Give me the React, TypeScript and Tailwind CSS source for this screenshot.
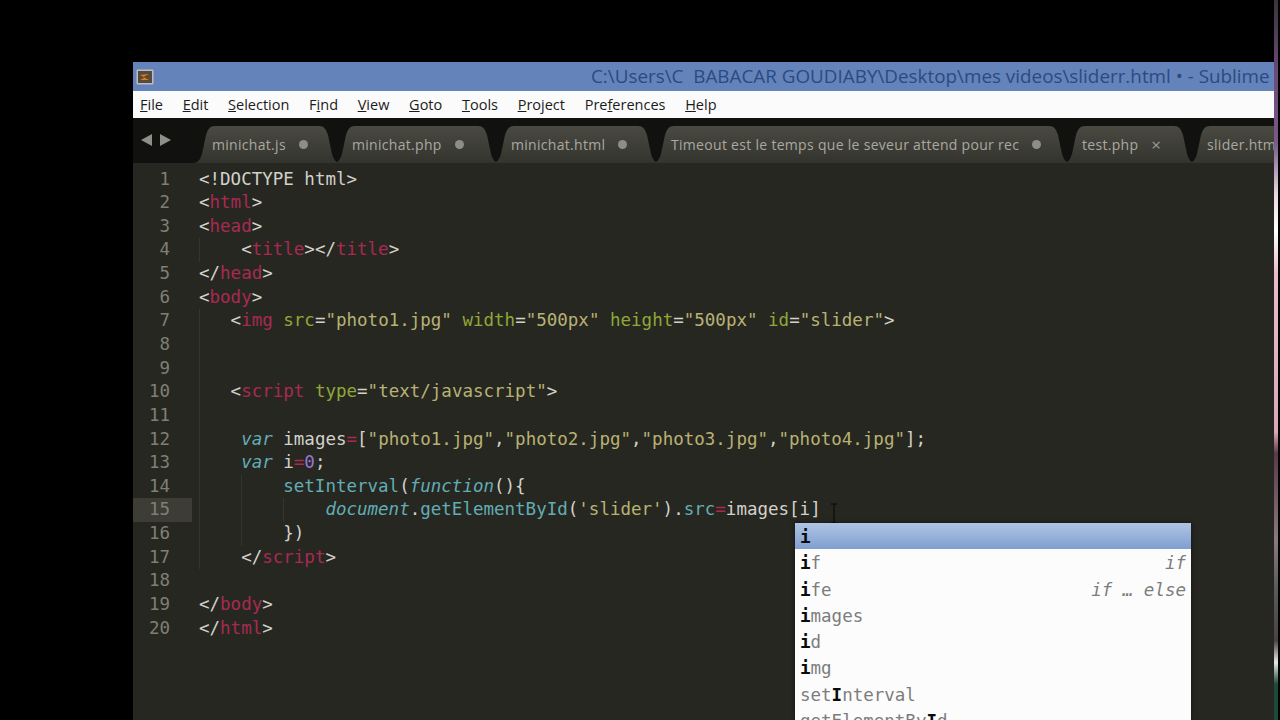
import React from "react";

type Tok = [string, string?];

const W = "text-[#d2d2ca]";
const R = "text-[#a82a52]";
const G = "text-[#8fa838]";
const Y = "text-[#b8b274]";
const B = "text-[#62adb6]";
const V = "text-[#9478d0]";
const I = "text-[#62adb6] italic";

const CH = 10.535;

const lines: { indent: number; toks: Tok[]; guides?: number[] }[] = [
  { indent: 0, toks: [["<!DOCTYPE html>", W]] },
  { indent: 0, toks: [["<", W], ["html", R], [">", W]] },
  { indent: 0, toks: [["<", W], ["head", R], [">", W]] },
  { indent: 4, toks: [["<", W], ["title", R], ["></", W], ["title", R], [">", W]], guides: [0] },
  { indent: 0, toks: [["</", W], ["head", R], [">", W]] },
  { indent: 0, toks: [["<", W], ["body", R], [">", W]] },
  {
    indent: 3,
    toks: [
      ["<", W], ["img", R], [" ", W], ["src", G], ["=", W], ['"photo1.jpg"', Y], [" ", W],
      ["width", G], ["=", W], ['"500px"', Y], [" ", W], ["height", G], ["=", W], ['"500px"', Y], [" ", W],
      ["id", G], ["=", W], ['"slider"', Y], [">", W],
    ],
    guides: [0],
  },
  { indent: 0, toks: [], guides: [0] },
  { indent: 0, toks: [], guides: [0] },
  {
    indent: 3,
    toks: [["<", W], ["script", R], [" ", W], ["type", G], ["=", W], ['"text/javascript"', Y], [">", W]],
    guides: [0],
  },
  { indent: 0, toks: [], guides: [0] },
  {
    indent: 4,
    toks: [
      ["var", I], [" images", W], ["=", R], ["[", W], ['"photo1.jpg"', Y], [",", W], ['"photo2.jpg"', Y], [",", W],
      ['"photo3.jpg"', Y], [",", W], ['"photo4.jpg"', Y], ["];", W],
    ],
    guides: [0],
  },
  { indent: 4, toks: [["var", I], [" i", W], ["=", R], ["0", V], [";", W]], guides: [0] },
  { indent: 8, toks: [["setInterval", B], ["(", W], ["function", I], ["(){", W]], guides: [0, 4] },
  {
    indent: 12,
    toks: [
      ["document", I], [".", W], ["getElementById", B], ["(", W], ["'slider'", Y], [")", W], [".", W], ["src", B],
      ["=", R], ["images[i]", W],
    ],
    guides: [0, 4, 8],
  },
  { indent: 8, toks: [["})", W]], guides: [0, 4] },
  { indent: 4, toks: [["</", W], ["script", R], [">", W]], guides: [0] },
  { indent: 0, toks: [] },
  { indent: 0, toks: [["</", W], ["body", R], [">", W]] },
  { indent: 0, toks: [["</", W], ["html", R], [">", W]] },
];

const menu: [string, string, string][] = [
  ["", "F", "ile"],
  ["", "E", "dit"],
  ["", "S", "election"],
  ["F", "i", "nd"],
  ["", "V", "iew"],
  ["", "G", "oto"],
  ["", "T", "ools"],
  ["", "P", "roject"],
  ["Pre", "f", "erences"],
  ["", "H", "elp"],
];

const tabs = [
  { name: "minichat.js", width: "w-[148px]", mark: "dot" },
  { name: "minichat.php", width: "w-[167px]", mark: "dot" },
  { name: "minichat.html", width: "w-[168px]", mark: "dot" },
  { name: "Timeout est le temps que le seveur attend pour rec", width: "w-[419px]", mark: "dot" },
  { name: "test.php", width: "w-[133px]", mark: "x" },
  { name: "slider.html", width: "w-[200px]", mark: "" },
];

const popup: { pre?: string; hit: string; rest: string; hint?: string; sel?: boolean }[] = [
  { hit: "i", rest: "", sel: true },
  { hit: "i", rest: "f", hint: "if" },
  { hit: "i", rest: "fe", hint: "if … else" },
  { hit: "i", rest: "mages" },
  { hit: "i", rest: "d" },
  { hit: "i", rest: "mg" },
  { pre: "set", hit: "I", rest: "nterval" },
  { pre: "getElementBy", hit: "I", rest: "d" },
];

function TabEdge({ flip }: { flip?: boolean }) {
  return (
    <svg width="22" height="37" viewBox="0 0 22 37" className={`shrink-0 ${flip ? "-scale-x-100" : ""}`}>
      <defs>
        <linearGradient id="tabfill" x1="0" y1="0" x2="0" y2="1">
          <stop offset="0" stopColor="#4a4a43" />
          <stop offset="1" stopColor="#34342e" />
        </linearGradient>
      </defs>
      <path d="M0 37 C5 37 7 34 9 28 L13 9 C15 3 17 0 22 0 L22 37 Z" fill="url(#tabfill)" />
    </svg>
  );
}

function Tab({ name, width, mark }: { name: string; width: string; mark: string }) {
  return (
    <div className={`relative h-[37px] -mr-[8px] shrink-0 ${width}`}>
      <div className="absolute inset-0 flex">
        <TabEdge />
        <div className="flex-1 bg-gradient-to-b from-[#4a4a43] to-[#34342e]" />
        <TabEdge flip />
      </div>
      <div className="relative flex items-center h-full pl-[19px] text-[14px] tracking-[0.3px] text-[#a9a9a1] whitespace-nowrap [font-family:'Open_Sans',sans-serif]">
        <span>{name}</span>
        {mark === "dot" && <span className="ml-[13px] w-[9px] h-[9px] rounded-full bg-[#8e8e88]" />}
        {mark === "x" && <span className="ml-[13px] text-[17px] leading-none text-[#9a9a94]">×</span>}
      </div>
    </div>
  );
}

export default function App() {
  return (
    <div className="w-[1280px] h-[720px] overflow-hidden bg-black flex">
      <div className="w-[133px] shrink-0" />
      <div className="w-[1141px] shrink-0 pt-[62px]">
        <div className="relative h-[658px] flex flex-col bg-[#272721]">
          {/* title bar */}
          <div className="h-[29px] shrink-0 bg-[#6483bb] flex items-center pl-[3px] overflow-hidden">
            <svg width="18" height="16" viewBox="0 0 18 16" className="shrink-0">
              <rect x="0.5" y="0.5" width="17" height="15" rx="1" fill="#b8bcc4" />
              <rect x="2" y="2" width="14" height="12" fill="#5a4a38" />
              <path d="M4 6 L13 5 L7 8 L13 11 L4 11 L9 8.5 Z" fill="#d8832c" />
            </svg>
            <div className="ml-[437px] whitespace-pre text-[18.85px] text-[#2c4a80] [font-family:'Open_Sans',sans-serif]">
              {"C:\\Users\\C  BABACAR GOUDIABY\\Desktop\\mes videos\\sliderr.html • - Sublime"}
            </div>
          </div>

          {/* menu bar */}
          <div className="h-[27px] shrink-0 bg-[#fbfbfb] flex items-center pl-[7px] gap-[19.7px] text-[14.5px] text-[#1c1c1c] [font-family:'Open_Sans',sans-serif]">
            {menu.map(([a, u, b]) => (
              <span key={a + u + b}>
                {a}
                <span className="underline">{u}</span>
                {b}
              </span>
            ))}
          </div>

          {/* tab strip */}
          <div className="h-[45px] shrink-0 bg-[#111110] flex items-end overflow-hidden">
            <div className="w-[60px] h-full shrink-0 flex items-center pl-[8px] gap-[8px] pb-[2px]">
              <span className="w-0 h-0 border-y-[6px] border-y-transparent border-r-[11px] border-r-[#8f8f8a]" />
              <span className="w-0 h-0 border-y-[6px] border-y-transparent border-l-[11px] border-l-[#8f8f8a]" />
            </div>
            {tabs.map((t) => (
              <Tab key={t.name} {...t} />
            ))}
          </div>

          {/* editor */}
          <div className="flex-1 pt-[4.5px] text-[17.5px] [font-family:'DejaVu_Sans_Mono',monospace]">
            {lines.map((l, i) => (
              <div key={i} className="flex h-[23.65px] leading-[23.65px] whitespace-pre">
                <div
                  className={`w-[59px] shrink-0 pr-[22px] text-right text-[#7f7f75] ${
                    i === 14 ? "bg-[#3d3d36]" : ""
                  }`}
                >
                  {i + 1}
                </div>
                <div className="relative ml-[7px] flex-1">
                  {l.guides?.map((g) => (
                    <span
                      key={g}
                      className="absolute top-0 bottom-0 w-px bg-[#35352e]"
                      style={{ left: g * CH }}
                    />
                  ))}
                  <span style={{ paddingLeft: l.indent * CH }}>
                    {l.toks.map(([t, c], j) => (
                      <span key={j} className={c}>
                        {t}
                      </span>
                    ))}
                  </span>
                </div>
              </div>
            ))}
          </div>

          {/* mouse cursor */}
          <svg className="absolute left-[696px] top-[441px]" width="10" height="22" viewBox="0 0 10 22">
            <path d="M2 1 H8 M5 1 V20 M2 20 H8" stroke="#111" strokeWidth="1.5" fill="none" />
          </svg>

          {/* autocomplete popup */}
          <div className="absolute left-[662px] top-[461px] w-[396px] h-[197px] overflow-hidden bg-[#fcfcfc] text-[17.5px] text-[#7c7c7c] shadow-[0_0_4px_rgba(0,0,0,0.6)] [font-family:'DejaVu_Sans_Mono',monospace]">
            {popup.map((p, i) => (
              <div
                key={i}
                className={`flex justify-between h-[26.3px] leading-[28px] px-[5px] whitespace-pre ${
                  p.sel ? "bg-gradient-to-b from-[#afc4e4] to-[#7f9fd0]" : ""
                }`}
              >
                <span>
                  {p.pre}
                  <span className="font-bold text-[#0b0b0b]">{p.hit}</span>
                  {p.rest}
                </span>
                {p.hint && <span className="italic">{p.hint}</span>}
              </div>
            ))}
          </div>
        </div>
      </div>

      {/* sliver of the desktop wallpaper behind the window */}
      <div className="w-[4px] shrink-0 h-full bg-[linear-gradient(to_bottom,#3a3438_0%,#6a4a78_10%,#7a5a88_20%,#e8d8e0_27%,#ffffff_32%,#e8bccc_38%,#d8a8b8_60%,#5a3a48_63%,#8a7a80_75%,#5a5a5a_82%,#4a4246_89%,#e8e8e8_92%,#1f4a3a_95%,#1f4a3a_100%)]" />
      <div className="w-[2px] shrink-0" />
    </div>
  );
}
